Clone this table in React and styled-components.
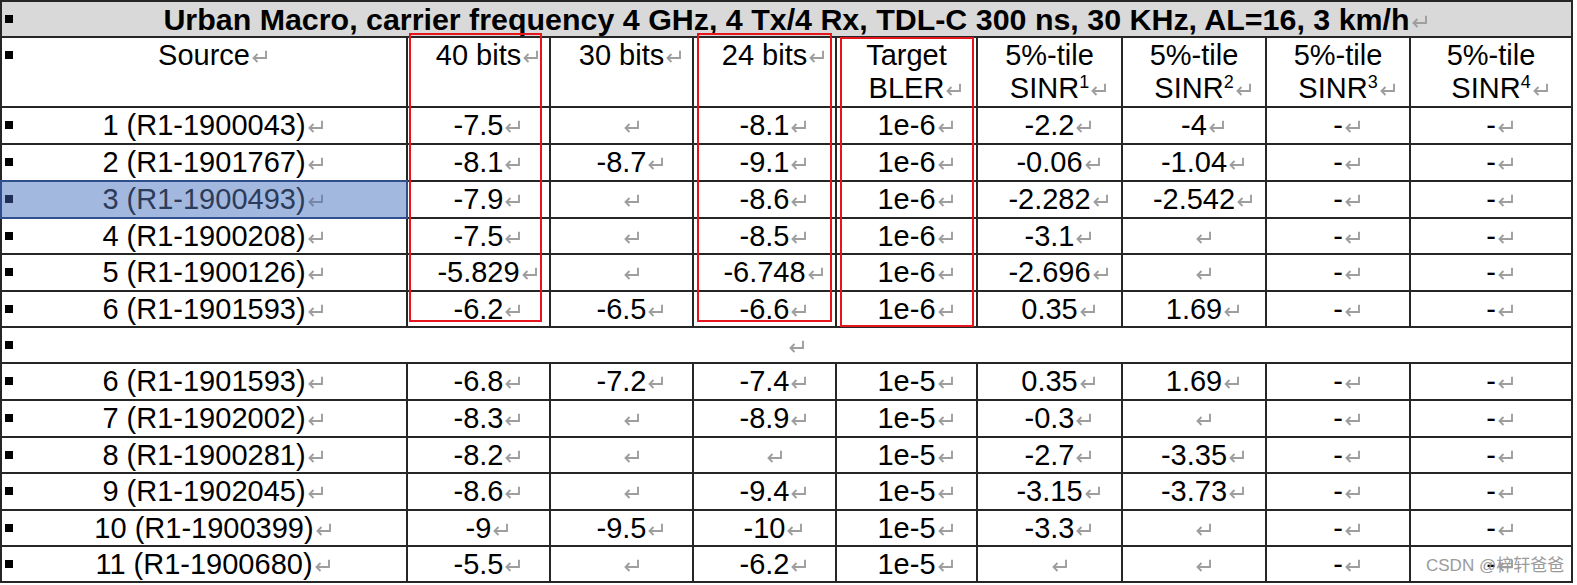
import React from "react";
import styled, { createGlobalStyle } from "styled-components";

const GlobalStyle = createGlobalStyle`
  html, body {
    margin: 0;
    padding: 0;
    background: #ffffff;
  }
  body {
    font-family: "Liberation Sans", Arial, sans-serif;
    color: #000000;
  }
`;

const Page = styled.div`
  position: relative;
  width: 1577px;
  height: 585px;
  overflow: hidden;
`;

const Table = styled.table`
  width: 1573px;
  border-collapse: collapse;
  table-layout: fixed;
  font-size: 29px;
  line-height: 33px;
`;

const Row = styled.tr`
  height: ${(p) => p.$h}px;
`;

const Cell = styled.td`
  border: 2px solid #262626;
  padding: 1px 0 0;
  vertical-align: top;
  text-align: center;
  white-space: nowrap;
  overflow: hidden;
  background: ${(p) => (p.$selected ? "#a3b8df" : p.$title ? "#d9d9d9" : "#ffffff")};
  color: ${(p) => (p.$selected ? "#2c3b5a" : "#000000")};
  font-weight: ${(p) => (p.$title ? "bold" : "normal")};
  font-size: ${(p) => (p.$title ? "30.4px" : "29px")};
  outline: ${(p) => (p.$selected ? "2px solid #2f4e8c" : "none")};
  outline-offset: -1px;
`;

const Lead = styled.div`
  display: grid;
  grid-template-columns: 14px 1fr 14px;
  align-items: start;
`;

const Bullet = styled.span`
  width: 8px;
  height: 8px;
  margin: 12px 0 0 3px;
  background: ${(p) => (p.$selected ? "#1f2f55" : "#000000")};
`;

/* paragraph mark: drawn after the text but not counted when centring */
const Mark = styled.svg`
  width: 17px;
  height: 13px;
  margin-left: 1px;
  margin-right: -18px;
  vertical-align: 2px;
  overflow: visible;
`;

const Sup = styled.sup`
  font-size: 18px;
  line-height: 0;
  vertical-align: 10px;
`;

const RedBox = styled.div`
  position: absolute;
  left: ${(p) => p.$x}px;
  top: ${(p) => p.$y}px;
  width: ${(p) => p.$w}px;
  height: ${(p) => p.$h}px;
  border: 2px solid #e8141b;
  box-sizing: border-box;
  pointer-events: none;
`;

const Watermark = styled.div`
  position: absolute;
  left: 1426px;
  top: 555px;
  font-family: "Liberation Sans", "Noto Sans CJK SC", sans-serif;
  font-size: 17px;
  line-height: 22px;
  color: #9b9b9b;
  white-space: nowrap;
`;

const Ret = ({ color = "#9e9e9e" }) => (
  <Mark viewBox="0 0 17 13">
    <path
      d="M15 0.8V8H2.5M6.5 4L2.5 8l4 4"
      fill="none"
      stroke={color}
      strokeWidth="1.9"
    />
  </Mark>
);

const widths = [406, 143, 143, 143, 141, 145, 144, 144, 162];

const rowsA = [
  ["1 (R1-1900043)", "-7.5", null, "-8.1", "1e-6", "-2.2", "-4", "-", "-"],
  ["2 (R1-1901767)", "-8.1", "-8.7", "-9.1", "1e-6", "-0.06", "-1.04", "-", "-"],
  ["3 (R1-1900493)", "-7.9", null, "-8.6", "1e-6", "-2.282", "-2.542", "-", "-"],
  ["4 (R1-1900208)", "-7.5", null, "-8.5", "1e-6", "-3.1", null, "-", "-"],
  ["5 (R1-1900126)", "-5.829", null, "-6.748", "1e-6", "-2.696", null, "-", "-"],
  ["6 (R1-1901593)", "-6.2", "-6.5", "-6.6", "1e-6", "0.35", "1.69", "-", "-"],
];
const heightsA = [37, 37, 37, 36, 37, 36];

const rowsB = [
  ["6 (R1-1901593)", "-6.8", "-7.2", "-7.4", "1e-5", "0.35", "1.69", "-", "-"],
  ["7 (R1-1902002)", "-8.3", null, "-8.9", "1e-5", "-0.3", null, "-", "-"],
  ["8 (R1-1900281)", "-8.2", null, null, "1e-5", "-2.7", "-3.35", "-", "-"],
  ["9 (R1-1902045)", "-8.6", null, "-9.4", "1e-5", "-3.15", "-3.73", "-", "-"],
  ["10 (R1-1900399)", "-9", "-9.5", "-10", "1e-5", "-3.3", null, "-", "-"],
  ["11 (R1-1900680)", "-5.5", null, "-6.2", "1e-5", null, null, "-", "-"],
];
const heightsB = [37, 37, 36, 37, 36, 36];

const SourceCell = ({ children, selected }) => (
  <Cell $selected={selected}>
    <Lead>
      <Bullet $selected={selected} />
      <span>
        {children}
        <Ret color={selected ? "#7686a6" : "#9e9e9e"} />
      </span>
      <span />
    </Lead>
  </Cell>
);

const DataRow = ({ cells, h, selected }) => (
  <Row $h={h}>
    <SourceCell selected={selected}>{cells[0]}</SourceCell>
    {cells.slice(1).map((v, i) => (
      <Cell key={i}>
        {v}
        <Ret />
      </Cell>
    ))}
  </Row>
);

const SinrHead = ({ n }) => (
  <Cell>
    5%-tile
    <br />
    SINR<Sup>{n}</Sup>
    <Ret />
  </Cell>
);

const App = () => {
  return (
    <Page>
      <GlobalStyle />
      <Table>
        <colgroup>
          {widths.map((w, i) => (
            <col key={i} style={{ width: w }} />
          ))}
        </colgroup>
        <tbody>
          <Row $h={36}>
            <Cell $title colSpan={9}>
              <Lead>
                <Bullet />
                <span>
                  Urban Macro, carrier frequency 4 GHz, 4 Tx/4 Rx, TDL-C 300 ns, 30 KHz, AL=16, 3 km/h
                  <Ret />
                </span>
                <span />
              </Lead>
            </Cell>
          </Row>
          <Row $h={70}>
            <SourceCell>Source</SourceCell>
            <Cell>
              40 bits
              <Ret />
            </Cell>
            <Cell>
              30 bits
              <Ret />
            </Cell>
            <Cell>
              24 bits
              <Ret />
            </Cell>
            <Cell>
              Target
              <br />
              BLER
              <Ret />
            </Cell>
            <SinrHead n={1} />
            <SinrHead n={2} />
            <SinrHead n={3} />
            <SinrHead n={4} />
          </Row>
          {rowsA.map((r, i) => (
            <DataRow key={i} cells={r} h={heightsA[i]} selected={i === 2} />
          ))}
          <Row $h={36}>
            <Cell colSpan={9}>
              <Lead>
                <Bullet />
                <span>
                  <Ret />
                </span>
                <span />
              </Lead>
            </Cell>
          </Row>
          {rowsB.map((r, i) => (
            <DataRow key={i} cells={r} h={heightsB[i]} />
          ))}
        </tbody>
      </Table>
      <RedBox $x={409} $y={33} $w={133} $h={289} />
      <RedBox $x={697} $y={33} $w={135} $h={289} />
      <RedBox $x={840} $y={37} $w={134} $h={290} />
      <Watermark>CSDN @梓轩爸爸</Watermark>
    </Page>
  );
};

export default App;
